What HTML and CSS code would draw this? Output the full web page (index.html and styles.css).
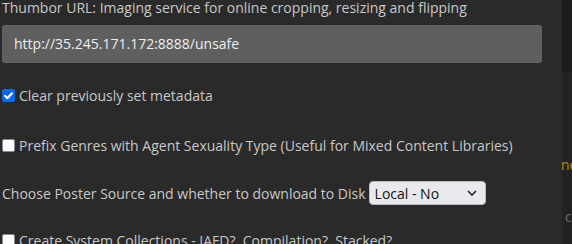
FILE: index.html
```html
<!DOCTYPE html>
<html>
<head>
<meta charset="utf-8">
<link rel="stylesheet" href="styles.css">
</head>
<body>
<div class="page">
  <main class="settings">
    <div class="label first">Thumbor URL: Imaging service for online cropping, resizing and flipping</div>
    <div class="input">http://35.245.171.172:8888/unsafe</div>
    <div class="row r1"><span class="cb checked"><svg viewBox="0 0 13 13" width="13" height="13"><path d="M3 6.8 L5.4 9.2 L10 4.2" fill="none" stroke="#fff" stroke-width="2" stroke-linecap="round" stroke-linejoin="round"/></svg></span><span>Clear previously set metadata</span></div>
    <div class="row r2"><span class="cb"></span><span>Prefix Genres with Agent Sexuality Type (Useful for Mixed Content Libraries)</span></div>
    <div class="row r3"><span>Choose Poster Source and whether to download to Disk</span><span class="select">Local - No<svg viewBox="0 0 10 6" width="10" height="6"><path d="M1 1 L5 5 L9 1" fill="none" stroke="#222" stroke-width="1.6"/></svg></span></div>
    <div class="row r4"><span class="cb"></span><span>Create System Collections - IAFD?, Compilation?, Stacked?</span></div>
  </main>
  <aside class="side">
    <div class="band top"></div>
    <div class="band mid"><span class="orange">ne</span></div>
    <div class="band low"><span class="grey">cl</span></div>
  </aside>
</div>
</body>
</html>
```
FILE: styles.css
```css
html, body {
  margin: 0;
  padding: 0;
  background: #2a2a2a;
  overflow: hidden;
}
body {
  font-family: "Open Sans", "Noto Sans", sans-serif;
  font-size: 14px;
  color: #c8c8c8;
}
.page {
  display: flex;
  width: 572px;
  height: 244px;
  overflow: hidden;
}
.settings {
  width: 562px;
  flex: none;
  padding-left: 2px;
  box-sizing: border-box;
}
.label {
  line-height: 20px;
  margin-top: -2px;
  white-space: nowrap;
}
.input {
  margin-top: 7px;
  width: 540px;
  height: 38px;
  box-sizing: border-box;
  background: #5f5f5f;
  border-radius: 3px;
  padding-left: 12px;
  line-height: 38px;
  color: #eeeeee;
}
.row {
  display: flex;
  align-items: center;
  white-space: nowrap;
  height: 24px;
}
.r1 { margin-top: 20px; }
.r2 { margin-top: 26px; }
.r3 { margin-top: 24px; }
.r4 { margin-top: 23px; }
.cb {
  width: 13px;
  height: 13px;
  box-sizing: border-box;
  border: 1px solid #8a8a95;
  border-radius: 2px;
  background: #ffffff;
  margin-right: 4px;
  flex: none;
  display: flex;
}
.cb.checked {
  background: #0b68e6;
  border-color: #0b68e6;
}
.cb.checked svg { margin: -1px; }
.select {
  margin-left: 3px;
  width: 117px;
  height: 24px;
  box-sizing: border-box;
  background: #e9e9ed;
  border: 1px solid #b8b8c0;
  border-radius: 4px;
  color: #111;
  padding-left: 5px;
  padding-right: 8px;
  display: flex;
  align-items: center;
  justify-content: space-between;
  font-size: 14px;
}
.side {
  width: 10px;
  flex: none;
  display: flex;
  flex-direction: column;
  overflow: hidden;
  background: #222222;
}
.band { flex: none; overflow: hidden; white-space: nowrap; }
.top { height: 72px; background: #1d1d1d; }
.mid { height: 108px; background: #232323; padding-top: 84px; box-sizing: border-box; }
.low { height: 64px; background: #222222; padding-top: 28px; box-sizing: border-box; }
.orange { color: #b98a17; font-size: 14px; margin-left: -1px; line-height: 18px; display: block; }
.grey { color: #6a6a6a; font-size: 14px; margin-left: 3px; line-height: 18px; display: block; }
```
